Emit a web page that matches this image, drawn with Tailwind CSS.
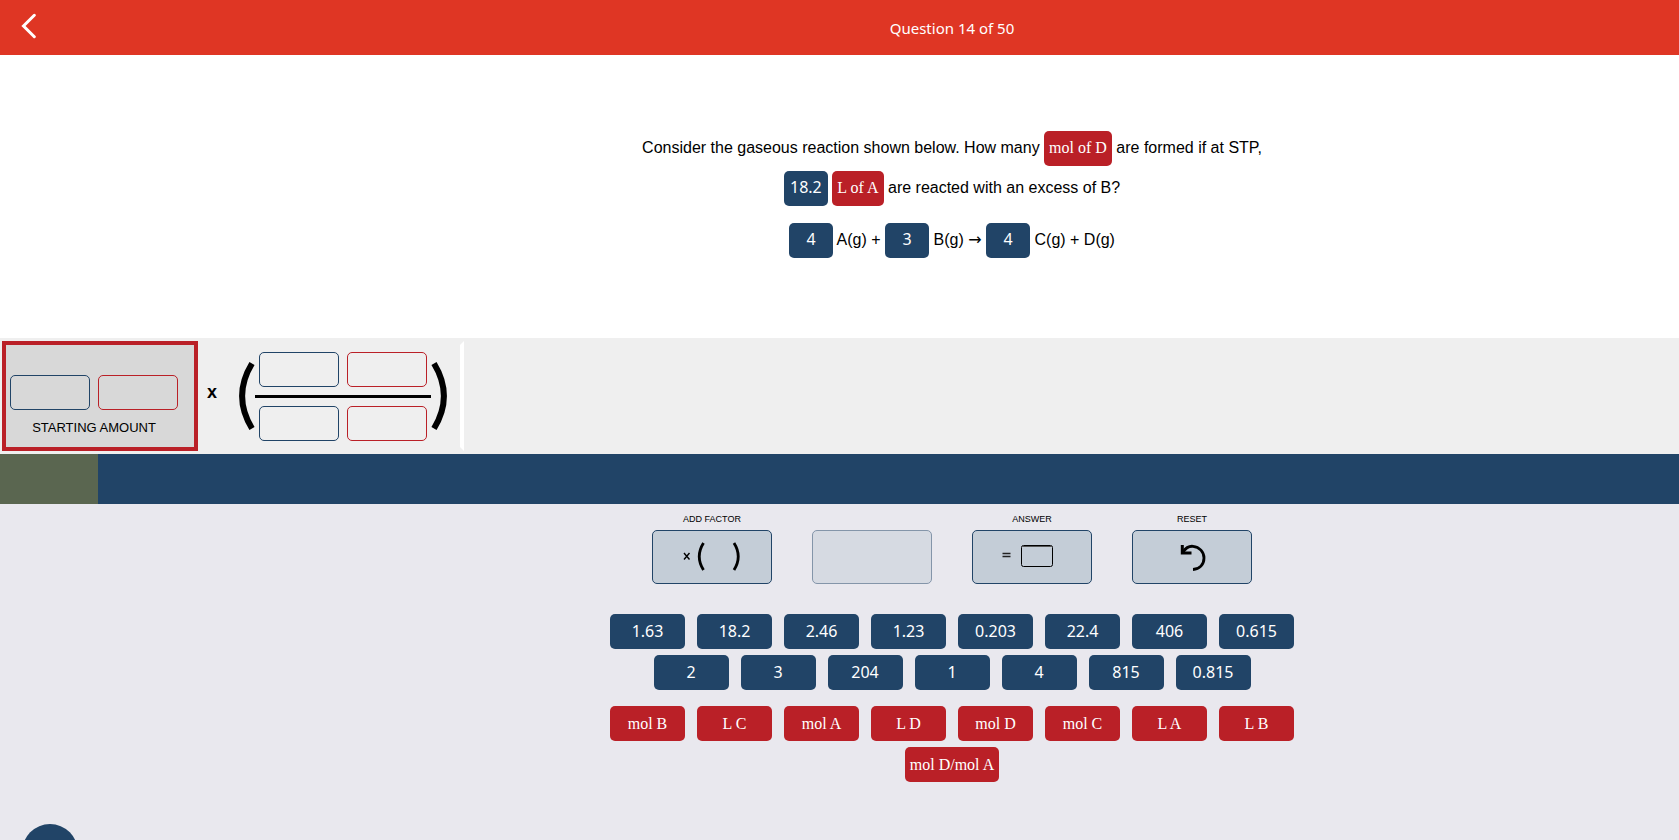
<!DOCTYPE html>
<html lang="en">
<head>
  <meta charset="UTF-8" />
  <meta name="viewport" content="width=device-width, initial-scale=1.0" />
  <title>Stoichiometry Practice</title>
  <script src="https://cdn.jsdelivr.net/npm/@tailwindcss/browser@4"></script>
</head>
<body class="bg-[#e9e8ee] min-h-screen overflow-x-hidden font-['Liberation_Sans',Arial,sans-serif] text-base text-black">

  <header class="flex items-center h-[55px] bg-[#df3624] text-white">
    <button type="button" aria-label="Back" class="w-[225px] h-full pl-5">
      <svg class="w-4 h-[26px] mb-1" viewBox="0 0 16 26" fill="none" stroke="currentColor" stroke-width="3" stroke-linecap="round">
        <path d="M14.3 2.3 L3.5 13 L14.3 23.7" />
      </svg>
    </button>
    <h1 class="flex-1 pt-[2px] text-center text-[15px] font-['Noto_Sans',sans-serif]">Question 14 of 50</h1>
  </header>

  <main>
    <!-- Question -->
    <section class="bg-white pl-[225px] pt-[73px] pb-[78px] text-center leading-10">
      <p class="max-w-[640px] mx-auto">
        Consider the gaseous reaction shown below. How many
        <span class="inline-block h-[35px] px-[5px] leading-[33px] rounded-[5px] bg-[#ba2027] text-white font-['Liberation_Serif',serif]">mol of D</span>
        are formed if at STP,
        <span class="inline-block h-[35px] w-11 leading-[33px] rounded-[5px] bg-[#214467] text-white font-['Noto_Sans',sans-serif]">18.2</span>
        <span class="inline-block h-[35px] px-[5px] leading-[33px] rounded-[5px] bg-[#ba2027] text-white font-['Liberation_Serif',serif]">L of A</span>
        are reacted with an excess of B?
      </p>
      <p class="mt-3">
        <span class="inline-block h-[35px] w-11 leading-[33px] rounded-[5px] bg-[#214467] text-white font-['Noto_Sans',sans-serif]">4</span>
        A(g) +
        <span class="inline-block h-[35px] w-11 leading-[33px] rounded-[5px] bg-[#214467] text-white font-['Noto_Sans',sans-serif]">3</span>
        B(g) <span class="font-['DejaVu_Sans',sans-serif]">→</span>
        <span class="inline-block h-[35px] w-11 leading-[33px] rounded-[5px] bg-[#214467] text-white font-['Noto_Sans',sans-serif]">4</span>
        C(g) + D(g)
      </p>
    </section>

    <!-- Work area -->
    <section class="flex bg-[#efefef] pt-[3px] pb-[3px] pl-[2px]">
      <div class="w-[196px] h-[110px] border-4 border-[#ba2027] bg-[#d8d8d8] pt-[30px] pl-1">
        <div class="flex gap-2">
          <button type="button" aria-label="Starting value" class="w-20 h-[35px] border border-[#214467] rounded-[5px]"></button>
          <button type="button" aria-label="Starting unit" class="w-20 h-[35px] border border-[#ba2027] rounded-[5px]"></button>
        </div>
        <p class="w-[168px] mt-2 text-center text-[13px]">STARTING AMOUNT</p>
      </div>
      <div class="flex items-center w-[266px] h-[110px] border-4 border-transparent border-r-white pl-[5px]">
        <span class="w-8 pb-2 text-lg font-bold">x</span>
        <svg class="w-4 h-[70px]" viewBox="0 0 16 70" fill="none" stroke="black" stroke-width="6">
          <path d="M13 2.500 Q-6.800 35 13 67.500" />
        </svg>
        <div>
          <div class="flex gap-2 px-1">
            <button type="button" aria-label="Numerator value" class="w-20 h-[35px] border border-[#214467] rounded-[5px]"></button>
            <button type="button" aria-label="Numerator unit" class="w-20 h-[35px] border border-[#ba2027] rounded-[5px]"></button>
          </div>
          <div class="h-[3px] my-2 bg-black"></div>
          <div class="flex gap-2 px-1">
            <button type="button" aria-label="Denominator value" class="w-20 h-[35px] border border-[#214467] rounded-[5px]"></button>
            <button type="button" aria-label="Denominator unit" class="w-20 h-[35px] border border-[#ba2027] rounded-[5px]"></button>
          </div>
        </div>
        <svg class="w-4 h-[70px]" viewBox="0 0 16 70" fill="none" stroke="black" stroke-width="6">
          <path d="M3 2.500 Q22.800 35 3 67.500" />
        </svg>
      </div>
    </section>

    <div class="h-[50px] bg-[#214467]">
      <div class="w-[98px] h-full bg-[#5a6650]"></div>
    </div>

    <!-- Controls -->
    <section class="pl-[225px] pt-2 pb-10">
      <div class="flex justify-center gap-10 text-[9px]">
        <div class="w-[120px] text-center">
          <label for="add-factor" class="block h-[18px] leading-[14px]">ADD FACTOR</label>
          <button id="add-factor" type="button" class="flex items-center justify-center w-full h-[54px] border border-[#214467] rounded-[5px] bg-[#c4cdd7]">
            <svg class="w-[60px] h-8" viewBox="0 0 60 32" fill="none" stroke="black">
              <path d="M2 12 L7.500 18.500 M7.500 12 L2 18.500" stroke-width="1.4" />
              <path d="M21.500 2 Q13 15.500 21.500 29 M52 2 Q60.500 15.500 52 29" stroke-width="2.8" />
            </svg>
          </button>
        </div>
        <div class="w-[120px] pt-[18px]">
          <button type="button" aria-label="Empty" disabled class="w-full h-[54px] border border-[#214467] rounded-[5px] bg-[#c4cdd7] opacity-50"></button>
        </div>
        <div class="w-[120px] text-center">
          <label for="answer" class="block h-[18px] leading-[14px]">ANSWER</label>
          <button id="answer" type="button" class="flex items-center justify-center w-full h-[54px] border border-[#214467] rounded-[5px] bg-[#c4cdd7]">
            <svg class="w-[60px] h-8" viewBox="0 0 60 32" fill="none" stroke="black">
              <path d="M0.500 12.500 H8.500 M0.500 15.500 H8.500" stroke="#222" stroke-width="1.5" />
              <rect x="19.500" y="4.500" width="31" height="21" rx="2" />
              <path d="M20 5.500 H50" stroke="#555" />
            </svg>
          </button>
        </div>
        <div class="w-[120px] text-center">
          <label for="reset" class="block h-[18px] leading-[14px]">RESET</label>
          <button id="reset" type="button" class="flex items-center justify-center w-full h-[54px] border border-[#214467] rounded-[5px] bg-[#c4cdd7]">
            <svg class="w-7 h-8" viewBox="0 0 28 32" fill="none" stroke="black">
              <path d="M5 11 C8 6.500 12 5 15 5.300 C21.500 6 26 11 26 17 C26 23.500 21.500 28.300 15 28.500" stroke-width="2.8" />
              <path d="M4.300 4 V12 H13.500" stroke-width="3" />
            </svg>
          </button>
        </div>
      </div>

      <!-- Number tiles -->
      <div class="flex flex-wrap justify-center gap-x-3 gap-y-[6px] max-w-[700px] mx-auto mt-[26px] text-white font-['Noto_Sans',sans-serif]">
        <button type="button" class="w-[75px] h-[35px] rounded-[5px] bg-[#214467]">1.63</button>
        <button type="button" class="w-[75px] h-[35px] rounded-[5px] bg-[#214467]">18.2</button>
        <button type="button" class="w-[75px] h-[35px] rounded-[5px] bg-[#214467]">2.46</button>
        <button type="button" class="w-[75px] h-[35px] rounded-[5px] bg-[#214467]">1.23</button>
        <button type="button" class="w-[75px] h-[35px] rounded-[5px] bg-[#214467]">0.203</button>
        <button type="button" class="w-[75px] h-[35px] rounded-[5px] bg-[#214467]">22.4</button>
        <button type="button" class="w-[75px] h-[35px] rounded-[5px] bg-[#214467]">406</button>
        <button type="button" class="w-[75px] h-[35px] rounded-[5px] bg-[#214467]">0.615</button>
        <button type="button" class="w-[75px] h-[35px] rounded-[5px] bg-[#214467]">2</button>
        <button type="button" class="w-[75px] h-[35px] rounded-[5px] bg-[#214467]">3</button>
        <button type="button" class="w-[75px] h-[35px] rounded-[5px] bg-[#214467]">204</button>
        <button type="button" class="w-[75px] h-[35px] rounded-[5px] bg-[#214467]">1</button>
        <button type="button" class="w-[75px] h-[35px] rounded-[5px] bg-[#214467]">4</button>
        <button type="button" class="w-[75px] h-[35px] rounded-[5px] bg-[#214467]">815</button>
        <button type="button" class="w-[75px] h-[35px] rounded-[5px] bg-[#214467]">0.815</button>
      </div>

      <!-- Unit tiles -->
      <div class="flex flex-wrap justify-center gap-x-3 gap-y-[6px] max-w-[700px] mx-auto mt-4 text-white font-['Liberation_Serif',serif]">
        <button type="button" class="min-w-[75px] h-[35px] px-[5px] pt-[2px] rounded-[5px] bg-[#ba2027]">mol B</button>
        <button type="button" class="min-w-[75px] h-[35px] px-[5px] pt-[2px] rounded-[5px] bg-[#ba2027]">L C</button>
        <button type="button" class="min-w-[75px] h-[35px] px-[5px] pt-[2px] rounded-[5px] bg-[#ba2027]">mol A</button>
        <button type="button" class="min-w-[75px] h-[35px] px-[5px] pt-[2px] rounded-[5px] bg-[#ba2027]">L D</button>
        <button type="button" class="min-w-[75px] h-[35px] px-[5px] pt-[2px] rounded-[5px] bg-[#ba2027]">mol D</button>
        <button type="button" class="min-w-[75px] h-[35px] px-[5px] pt-[2px] rounded-[5px] bg-[#ba2027]">mol C</button>
        <button type="button" class="min-w-[75px] h-[35px] px-[5px] pt-[2px] rounded-[5px] bg-[#ba2027]">L A</button>
        <button type="button" class="min-w-[75px] h-[35px] px-[5px] pt-[2px] rounded-[5px] bg-[#ba2027]">L B</button>
        <button type="button" class="min-w-[75px] h-[35px] px-[5px] pt-[2px] rounded-[5px] bg-[#ba2027]">mol D/mol A</button>
      </div>
    </section>
  </main>

  <button type="button" aria-label="Help" class="fixed left-[22px] -bottom-10 w-14 h-14 rounded-full bg-[#214467]"></button>

</body>
</html>
